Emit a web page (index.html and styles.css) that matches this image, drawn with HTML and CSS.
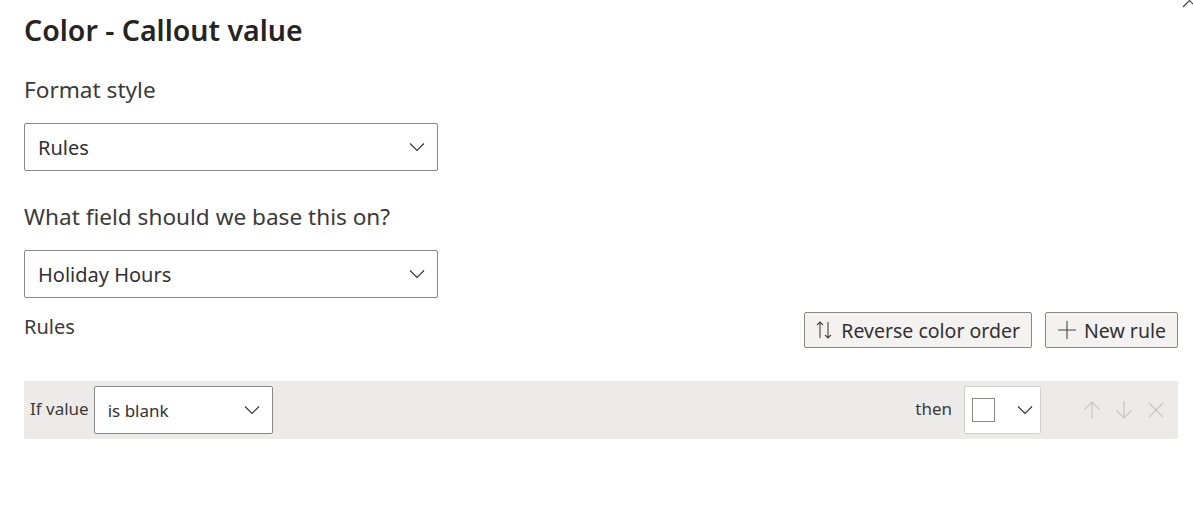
FILE: index.html
```html
<!DOCTYPE html>
<html>
<head>
<meta charset="utf-8">
<link rel="stylesheet" href="styles.css">
</head>
<body>
<div class="panel">
  <button class="close" aria-label="Close"><svg width="16" height="16" viewBox="0 0 16 16"><path d="M1 -6 L14 7 M14 -6 L1 7" stroke="#444" stroke-width="1.2" fill="none"/></svg></button>
  <h1 class="title">Color - Callout value</h1>
  <div class="label">Format style</div>
  <div class="select big">
    <span>Rules</span>
    <svg class="chev" width="16" height="10" viewBox="0 0 16 10"><path d="M1 1.5 L8 8.5 L15 1.5" stroke="#333" stroke-width="1.1" fill="none"/></svg>
  </div>
  <div class="label second">What field should we base this on?</div>
  <div class="select big">
    <span>Holiday Hours</span>
    <svg class="chev" width="16" height="10" viewBox="0 0 16 10"><path d="M1 1.5 L8 8.5 L15 1.5" stroke="#333" stroke-width="1.1" fill="none"/></svg>
  </div>
  <div class="rules-head">
    <div class="rules-label">Rules</div>
    <div class="actions">
      <button class="btn"><svg class="ico" width="16" height="20" viewBox="0 0 16 20"><path d="M4 18 V2 M1 5 L4 2 L7 5 M12 2 V18 M9 15 L12 18 L15 15" stroke="#444" stroke-width="1.1" fill="none"/></svg>Reverse color order</button>
      <button class="btn"><svg class="ico plus" width="20" height="20" viewBox="0 0 20 20"><path d="M10 1 V19 M1 10 H19" stroke="#444" stroke-width="1.1" fill="none"/></svg>New rule</button>
    </div>
  </div>
  <div class="rule-row">
    <span class="if">If value</span>
    <div class="select small">
      <span>is blank</span>
      <svg class="chev" width="16" height="10" viewBox="0 0 16 10"><path d="M1 1.5 L8 8.5 L15 1.5" stroke="#333" stroke-width="1.1" fill="none"/></svg>
    </div>
    <span class="spacer"></span>
    <span class="then">then</span>
    <div class="color-pick">
      <span class="swatch"></span>
      <svg class="chev" width="16" height="10" viewBox="0 0 16 10"><path d="M1 1.5 L8 8.5 L15 1.5" stroke="#333" stroke-width="1.1" fill="none"/></svg>
    </div>
    <div class="row-icons">
      <svg width="18" height="20" viewBox="0 0 18 20"><path d="M9 19 V2 M1.5 9.5 L9 2 L16.5 9.5" stroke="#c8c6c4" stroke-width="1.2" fill="none"/></svg>
      <svg width="18" height="20" viewBox="0 0 18 20"><path d="M9 1 V18 M1.5 10.5 L9 18 L16.5 10.5" stroke="#c8c6c4" stroke-width="1.2" fill="none"/></svg>
      <svg width="18" height="20" viewBox="0 0 18 20"><path d="M2 3 L16 17 M16 3 L2 17" stroke="#c8c6c4" stroke-width="1.2" fill="none"/></svg>
    </div>
  </div>
</div>
</body>
</html>
```
FILE: styles.css
```css
html, body {
  margin: 0;
  padding: 0;
  background: #ffffff;
}
body {
  font-family: "Noto Sans", "Open Sans", sans-serif;
  color: #323130;
  width: 1193px;
  height: 508px;
  overflow: hidden;
}
.panel {
  position: relative;
  padding: 12px 15px 0 24px;
}
.close {
  position: absolute;
  right: -5px;
  top: 0;
  width: 16px;
  height: 10px;
  padding: 0;
  border: 0;
  background: none;
  overflow: hidden;
}
.close svg { display: block; }
.title {
  margin: 0;
  font-size: 28.5px;
  font-weight: 600;
  line-height: 36px;
  color: #252423;
}
.label {
  margin-top: 28px;
  font-size: 22.6px;
  line-height: 28px;
  color: #3b3a39;
}
.label.second { margin-top: 32px; }
.select {
  display: flex;
  align-items: center;
  justify-content: space-between;
  box-sizing: border-box;
  border: 1px solid #8a8886;
  border-radius: 2px;
  background: #fff;
  font-size: 20px;
  color: #323130;
}
.select.big {
  width: 414px;
  height: 48px;
  padding: 0 12px 0 13px;
  margin-top: 19px;
}
.chev { display: block; }
.rules-head {
  display: flex;
  justify-content: space-between;
  align-items: flex-start;
  margin-top: 15px;
}
.rules-label {
  font-size: 20px;
  line-height: 28px;
  color: #3b3a39;
}
.actions {
  display: flex;
  gap: 13px;
  margin-top: -1px;
}
.btn {
  display: flex;
  align-items: center;
  height: 36px;
  box-sizing: border-box;
  padding: 0 11px 0 11px;
  border: 1px solid #8a8886;
  border-radius: 2px;
  background: #f3f2f1;
  font-family: inherit;
  font-size: 19.5px;
  color: #323130;
}
.btn .ico {
  display: block;
  margin-right: 9px;
}
.btn .plus { margin-right: 7px; }
.rule-row {
  display: flex;
  align-items: center;
  margin-top: 33px;
  height: 58px;
  background: #edebe9;
  padding: 0 13px 0 6px;
}
.if {
  font-size: 17px;
  color: #3b3a39;
  margin-right: 5px;
  margin-top: -4px;
}
.select.small {
  width: 179px;
  height: 48px;
  padding: 0 12px 0 13px;
  font-size: 17px;
}
.spacer { flex: 1; }
.then {
  font-size: 17px;
  color: #3b3a39;
  margin-right: 12px;
  margin-top: -4px;
}
.color-pick {
  display: flex;
  align-items: center;
  justify-content: space-between;
  box-sizing: border-box;
  width: 77px;
  height: 48px;
  padding: 0 7px 0 7px;
  border: 1px solid #d2d0ce;
  border-radius: 2px;
  background: #fff;
}
.swatch {
  width: 23px;
  height: 24px;
  box-sizing: border-box;
  border: 1px solid #8a8886;
  background: #fff;
}
.row-icons {
  display: flex;
  gap: 14px;
  margin-left: 42px;
}
.row-icons svg { display: block; }
```
